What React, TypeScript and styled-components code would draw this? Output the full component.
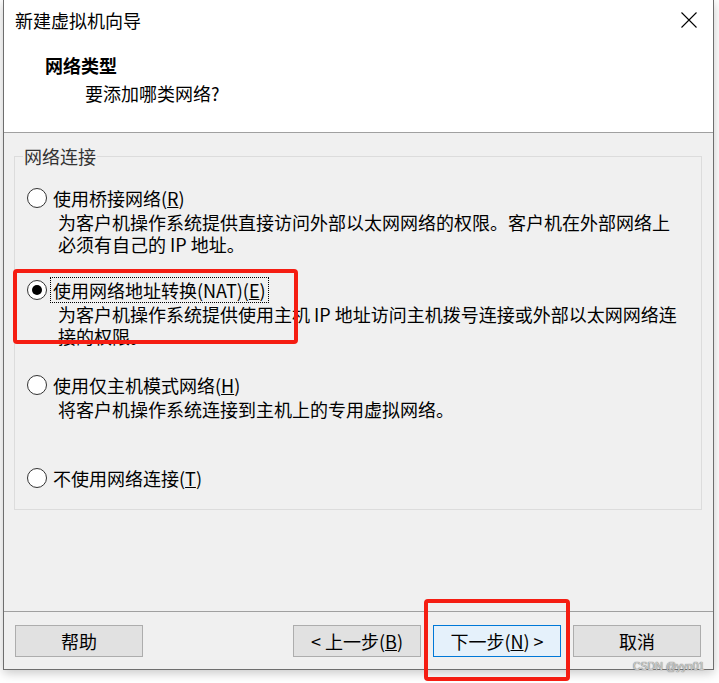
import React from "react";
import styled, { createGlobalStyle } from "styled-components";

const GlobalStyle = createGlobalStyle`
  html, body {
    margin: 0;
    padding: 0;
    background: #fff;
  }
  body {
    font-family: "Noto Sans CJK SC", "Noto Sans", sans-serif;
    color: #000;
  }
`;

const Page = styled.div`
  position: relative;
  width: 719px;
  height: 683px;
  overflow: hidden;
  background: #fff;
`;

const Window = styled.div`
  margin-left: 3px;
  width: 711px;
  height: 670px;
  box-sizing: border-box;
  border: 1px solid #6e6e6e;
  border-top: none;
  background: #f0f0f0;
  box-shadow: 0 3px 10px rgba(0, 0, 0, 0.22);
  display: flex;
  flex-direction: column;
`;

const Header = styled.div`
  height: 133px;
  box-sizing: border-box;
  padding: 8px 16px 0 11px;
  background: #fff;
  border-bottom: 1px solid #a0a0a0;
`;

const TitleRow = styled.div`
  display: flex;
  align-items: center;
  justify-content: space-between;
  height: 24px;
  font-size: 18px;
  line-height: 24px;
`;

const Heading = styled.div`
  margin: 21px 0 0 30px;
  font-size: 18px;
  line-height: 24px;
  font-weight: bold;
`;

const SubHeading = styled.div`
  margin: 4px 0 0 70px;
  font-size: 18px;
  line-height: 24px;
`;

const Body = styled.div`
  flex: 1;
  padding: 11px 11px 0 10px;
`;

const Group = styled.fieldset`
  margin: 0;
  padding: 18px 0 0 0;
  height: 366px;
  box-sizing: border-box;
  border: 1px solid #dcdcdc;
  min-width: 0;
`;

const Legend = styled.legend`
  margin-left: 8px;
  padding: 0 1px;
  font-size: 18px;
  line-height: 24px;
  color: #333;
`;

const Option = styled.div<{ $height: number }>`
  height: ${(p) => p.$height}px;
  padding-left: 12px;
`;

const OptionRow = styled.div`
  display: flex;
  align-items: center;
  height: 24px;
`;

const Radio = styled.span<{ $checked?: boolean }>`
  width: 20px;
  height: 20px;
  box-sizing: border-box;
  border: 1.5px solid #333;
  border-radius: 50%;
  background: #fff;
  display: flex;
  align-items: center;
  justify-content: center;
  flex-shrink: 0;

  &::after {
    content: "";
    width: 10px;
    height: 10px;
    border-radius: 50%;
    background: ${(p) => (p.$checked ? "#000" : "transparent")};
  }
`;

const Label = styled.span<{ $focused?: boolean }>`
  margin-left: 4px;
  padding: 0 2px;
  font-size: 18px;
  line-height: 24px;
  white-space: nowrap;
  outline: ${(p) => (p.$focused ? "1px dotted #000" : "none")};
`;

const Desc = styled.div`
  margin-top: 1px;
  padding-left: 31px;
  font-size: 18px;
  line-height: 22px;
  white-space: nowrap;
`;

const Footer = styled.div`
  display: flex;
  gap: 12px;
  padding: 13px 12px 12px 11px;
  border-top: 1px solid #a0a0a0;
`;

const Button = styled.button<{ $primary?: boolean; $push?: boolean }>`
  width: 128px;
  height: 32px;
  box-sizing: border-box;
  margin: 0;
  margin-left: ${(p) => (p.$push ? "auto" : "0")};
  padding: 0;
  border: 1px solid ${(p) => (p.$primary ? "#0078d7" : "#adadad")};
  background: ${(p) => (p.$primary ? "#e5f1fb" : "#e1e1e1")};
  font-family: inherit;
  font-size: 18px;
  line-height: 30px;
  color: #000;
`;

const Mark = styled.div<{ $x: number; $y: number; $w: number; $h: number }>`
  position: absolute;
  left: ${(p) => p.$x}px;
  top: ${(p) => p.$y}px;
  width: ${(p) => p.$w}px;
  height: ${(p) => p.$h}px;
  box-sizing: border-box;
  border: 4px solid #f51d12;
  border-radius: 4px;
  pointer-events: none;
`;

const Watermark = styled.div`
  position: absolute;
  left: 633px;
  top: 659px;
  font-family: "Liberation Sans", Arial, sans-serif;
  font-size: 10.5px;
  line-height: 14px;
  color: #d2d2d2;
  text-shadow: 0 0 1px #777, 0 0 1px #777;
`;

const CloseIcon = () => (
  <svg width="16" height="16" viewBox="0 0 16 16">
    <path d="M0.5 0.5 L15.5 15.5 M15.5 0.5 L0.5 15.5" stroke="#000" strokeWidth="1.1" fill="none" />
  </svg>
);

const App = () => {
  return (
    <Page>
      <GlobalStyle />
      <Window>
        <Header>
          <TitleRow>
            <span>新建虚拟机向导</span>
            <CloseIcon />
          </TitleRow>
          <Heading>网络类型</Heading>
          <SubHeading>要添加哪类网络?</SubHeading>
        </Header>
        <Body>
          <Group>
            <Legend>网络连接</Legend>
            <Option $height={92}>
              <OptionRow>
                <Radio />
                <Label>
                  使用桥接网络(<u>R</u>)
                </Label>
              </OptionRow>
              <Desc>
                为客户机操作系统提供直接访问外部以太网网络的权限。客户机在外部网络上
                <br />
                必须有自己的 IP 地址。
              </Desc>
            </Option>
            <Option $height={95}>
              <OptionRow>
                <Radio $checked />
                <Label $focused>
                  使用网络地址转换(NAT)(<u>E</u>)
                </Label>
              </OptionRow>
              <Desc>
                为客户机操作系统提供使用主机 IP 地址访问主机拨号连接或外部以太网网络连
                <br />
                接的权限。
              </Desc>
            </Option>
            <Option $height={93}>
              <OptionRow>
                <Radio />
                <Label>
                  使用仅主机模式网络(<u>H</u>)
                </Label>
              </OptionRow>
              <Desc>将客户机操作系统连接到主机上的专用虚拟网络。</Desc>
            </Option>
            <Option $height={24}>
              <OptionRow>
                <Radio />
                <Label>
                  不使用网络连接(<u>T</u>)
                </Label>
              </OptionRow>
            </Option>
          </Group>
        </Body>
        <Footer>
          <Button>帮助</Button>
          <Button $push>
            &lt; 上一步(<u>B</u>)
          </Button>
          <Button $primary>
            下一步(<u>N</u>) &gt;
          </Button>
          <Button>取消</Button>
        </Footer>
      </Window>
      <Mark $x={13} $y={269} $w={285} $h={75} />
      <Mark $x={424} $y={599} $w={146} $h={82} />
      <Watermark>CSDN @yyn01</Watermark>
    </Page>
  );
};

export default App;
